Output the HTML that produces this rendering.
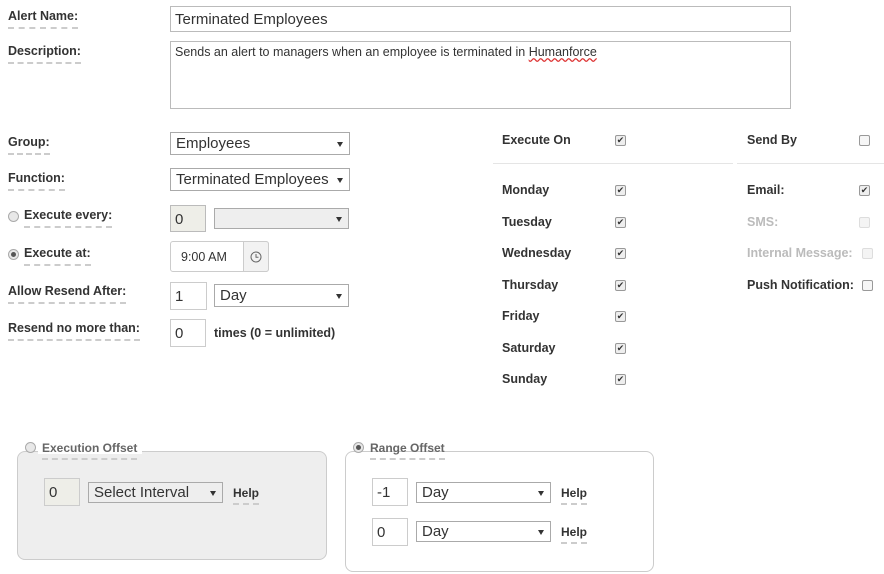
<!DOCTYPE html>
<html><head><style>
body{margin:0;width:884px;height:574px;background:#fff;font-family:"Liberation Sans",Arial,sans-serif;color:#333;position:relative;overflow:hidden}
.a{position:absolute}
.l{position:absolute;font-weight:bold;font-size:12.5px;line-height:15px;padding-bottom:3px;border-bottom:2px dashed #ccc}
.in{position:absolute;border:1px solid #bbb;background:#fff;box-sizing:border-box;font-size:15px;padding-left:4px;padding-top:2px;color:#333}
.sel{position:absolute;border:1px solid #aaa;background:#fff;box-sizing:border-box;font-size:15px;padding-left:5px;padding-top:1px;color:#333}
.sel:after{content:"";position:absolute;right:6px;top:50%;margin-top:-2px;border-left:3px solid transparent;border-right:3px solid transparent;border-top:5px solid #333}
.cb{position:absolute;width:9px;height:9px;border:1px solid #999;border-radius:2px;background:#eee;font-size:9px;line-height:9px;text-align:center;color:#333}
.cb.d{border-color:#ddd;background:#f4f4f4}
.t{position:absolute;font-weight:bold;font-size:12.5px;line-height:15px}
.radio{position:absolute;width:9px;height:9px;border:1px solid #aaa;border-radius:50%;background:#e8e8e8}
.radio.on:after{content:"";position:absolute;left:2px;top:2px;width:5px;height:5px;border-radius:50%;background:#555}
.hr{position:absolute;height:1px;background:#e5e5e5}
</style></head><body>
<div class="l" style="left:8px;top:9px">Alert Name:</div>
<div class="l" style="left:8px;top:44px">Description:</div>
<div class="in" style="left:170px;top:6px;width:621px;height:26px;line-height:22px">Terminated Employees</div>
<div class="in" style="left:170px;top:41px;width:621px;height:68px;font-size:12.5px;line-height:18px;padding-top:1px">Sends an alert to managers when an employee is terminated in <span style="text-decoration:underline wavy #d33">Humanforce</span></div>

<div class="l" style="left:8px;top:135px">Group:</div>
<div class="sel" style="left:170px;top:132px;width:180px;height:23px;line-height:20px">Employees</div>
<div class="l" style="left:8px;top:171px">Function:</div>
<div class="sel" style="left:170px;top:168px;width:180px;height:23px;line-height:20px">Terminated Employees</div>

<div class="radio" style="left:8px;top:211px"></div>
<div class="l" style="left:24px;top:208px">Execute every:</div>
<div class="in" style="left:170px;top:205px;width:36px;height:27px;line-height:23px;background:#eeeee8">0</div>
<div class="sel" style="left:214px;top:208px;width:135px;height:21px;background:#eee"></div>

<div class="radio on" style="left:8px;top:249px"></div>
<div class="l" style="left:24px;top:246px">Execute at:</div>
<div class="in" style="left:170px;top:241px;width:99px;height:31px;line-height:27px;padding-left:10px;font-size:12.5px;border-radius:3px;border-color:#ccc">9:00 AM</div>
<div class="a" style="left:243px;top:241px;width:26px;height:31px;box-sizing:border-box;border:1px solid #ccc;border-radius:0 3px 3px 0;background:#f2f2f2"><svg width="24" height="29" viewBox="0 0 24 29"><circle cx="12" cy="15" r="5" fill="none" stroke="#666" stroke-width="1"/><path d="M12 12v3.3h2.5" fill="none" stroke="#666"/></svg></div>

<div class="l" style="left:8px;top:284px">Allow Resend After:</div>
<div class="in" style="left:170px;top:282px;width:37px;height:28px;line-height:24px;border-color:#ccc">1</div>
<div class="sel" style="left:214px;top:284px;width:135px;height:23px;line-height:20px">Day</div>
<div class="l" style="left:8px;top:321px">Resend no more than:</div>
<div class="in" style="left:170px;top:319px;width:36px;height:28px;line-height:24px;border-color:#ccc">0</div>
<div class="t" style="left:214px;top:326px">times (0 = unlimited)</div>

<div class="t" style="left:502px;top:133px">Execute On</div><div class="cb" style="left:615px;top:135px">✔</div>
<div class="t" style="left:747px;top:133px">Send By</div><div class="cb" style="left:859px;top:135px;background:#f6f6f6"></div>
<div class="hr" style="left:493px;top:163px;width:240px"></div>
<div class="hr" style="left:737px;top:163px;width:147px"></div>
<div class="t" style="left:502px;top:183px">Monday</div><div class="cb" style="left:615px;top:185px">✔</div>
<div class="t" style="left:502px;top:215px">Tuesday</div><div class="cb" style="left:615px;top:217px">✔</div>
<div class="t" style="left:502px;top:246px">Wednesday</div><div class="cb" style="left:615px;top:248px">✔</div>
<div class="t" style="left:502px;top:278px">Thursday</div><div class="cb" style="left:615px;top:280px">✔</div>
<div class="t" style="left:502px;top:309px">Friday</div><div class="cb" style="left:615px;top:311px">✔</div>
<div class="t" style="left:502px;top:341px">Saturday</div><div class="cb" style="left:615px;top:343px">✔</div>
<div class="t" style="left:502px;top:372px">Sunday</div><div class="cb" style="left:615px;top:374px">✔</div>
<div class="t" style="left:747px;top:183px">Email:</div><div class="cb" style="left:859px;top:185px">✔</div>
<div class="t" style="left:747px;top:215px;color:#bbb">SMS:</div><div class="cb d" style="left:859px;top:217px"></div>
<div class="t" style="left:747px;top:246px;color:#bbb">Internal Message:</div><div class="cb d" style="left:862px;top:248px"></div>
<div class="t" style="left:747px;top:278px">Push Notification:</div><div class="cb" style="left:862px;top:280px;background:#f6f6f6"></div>

<div class="a" style="left:17px;top:451px;width:310px;height:109px;box-sizing:border-box;border:1px solid #ccc;border-radius:8px;background:#eee"></div>
<div class="a" style="left:38px;top:446px;width:104px;height:8px;background:#fff"></div>
<div class="radio" style="left:25px;top:442px"></div>
<div class="l" style="left:42px;top:441px;font-size:12px;color:#666;padding-bottom:2px">Execution Offset</div>
<div class="in" style="left:44px;top:478px;width:36px;height:28px;line-height:24px;background:#eeeee8;border-color:#ccc">0</div>
<div class="sel" style="left:88px;top:482px;width:135px;height:21px;line-height:18px;background:#eee">Select Interval</div>
<div class="l" style="left:233px;top:486px;font-size:12px;padding-bottom:2px">Help</div>

<div class="a" style="left:345px;top:451px;width:309px;height:121px;box-sizing:border-box;border:1px solid #ccc;border-radius:8px;background:#fff"></div>
<div class="radio on" style="left:353px;top:442px"></div>
<div class="l" style="left:370px;top:441px;font-size:12px;color:#666;padding-bottom:2px">Range Offset</div>
<div class="in" style="left:372px;top:478px;width:36px;height:28px;line-height:24px;border-color:#ccc">-1</div>
<div class="sel" style="left:416px;top:482px;width:135px;height:21px;line-height:18px">Day</div>
<div class="l" style="left:561px;top:486px;font-size:12px;padding-bottom:2px">Help</div>
<div class="in" style="left:372px;top:518px;width:36px;height:28px;line-height:24px;border-color:#ccc">0</div>
<div class="sel" style="left:416px;top:521px;width:135px;height:21px;line-height:18px">Day</div>
<div class="l" style="left:561px;top:525px;font-size:12px;padding-bottom:2px">Help</div>
</body></html>
